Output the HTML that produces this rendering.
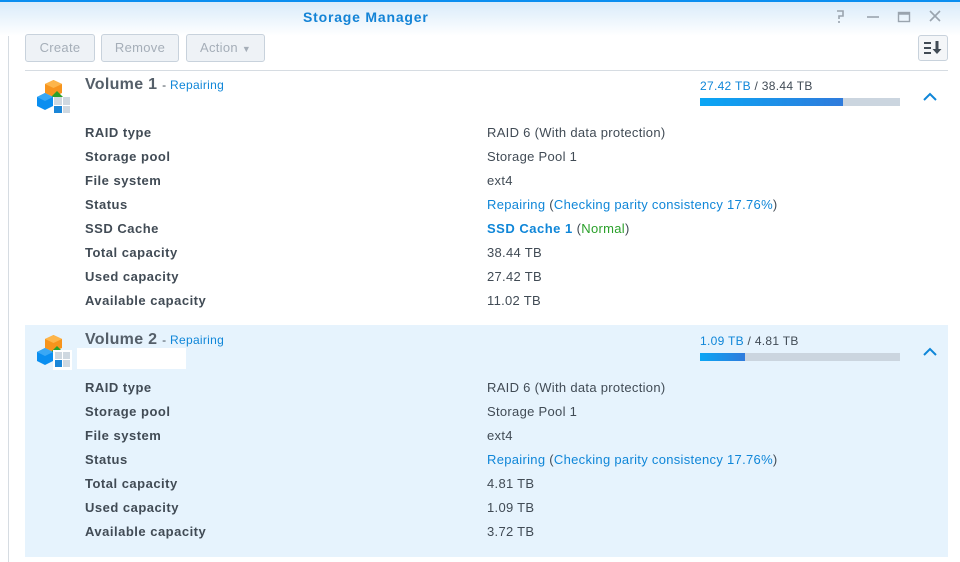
<!DOCTYPE html>
<html><head><meta charset="utf-8"><style>
*{margin:0;padding:0;box-sizing:border-box}
body{width:960px;height:562px;overflow:hidden;background:#fff;font-family:"Liberation Sans",Arial,sans-serif;font-size:13px;color:#414b55;position:relative;letter-spacing:0.3px}
.a{position:absolute;white-space:nowrap}
.tb{left:0;top:0;width:960px;height:36px;background:linear-gradient(#d9ebfa,#fff);border-top:2px solid #0a8ef0}
.btn{top:34px;height:28px;border:1px solid #c8d2dc;border-radius:3px;background:#eef2f6;color:#a5aeb8;font-size:13px;text-align:center;line-height:26px}
.lbl{left:85px;font-weight:bold;color:#414b55;letter-spacing:0.5px}
.val{left:487px;color:#414b55}
.blue{color:#0f86d8}
.bar{left:700px;width:200px;height:8px;background:#cbd5df}
.bar div{height:8px;background:linear-gradient(90deg,#0aa6f5,#2f7bdc)}
</style></head><body>
<div class="a tb"></div>
<div class="a" style="left:303px;top:9px;font-size:14px;font-weight:bold;color:#1383d6;letter-spacing:0.8px">Storage Manager</div>
<svg class="a" style="left:830px;top:8px" width="120" height="18" viewBox="0 0 120 18">
<path d="M7 3h6v5h-4v3M9 13v2" stroke="#9aa4ae" stroke-width="1.6" fill="none"/>
<path d="M37 9h12" stroke="#9aa4ae" stroke-width="1.6"/>
<rect x="68.5" y="4.5" width="11" height="9" stroke="#9aa4ae" stroke-width="1.4" fill="none"/><path d="M68 5.5h12" stroke="#9aa4ae" stroke-width="2.5"/>
<path d="M100 3l10 10M110 3l-10 10" stroke="#9aa4ae" stroke-width="1.6"/></svg>
<div class="a" style="left:8px;top:36px;width:1px;height:526px;background:#d6dce2"></div>
<div class="a btn" style="left:25px;width:70px">Create</div>
<div class="a btn" style="left:101px;width:78px">Remove</div>
<div class="a btn" style="left:186px;width:79px">Action <span style="font-size:9px">▼</span></div>
<div class="a" style="left:918px;top:35px;width:30px;height:26px;border:1px solid #c8d2dc;border-radius:3px;background:#f4f6f8"></div>
<svg class="a" style="left:918px;top:35px" width="30" height="26" viewBox="0 0 30 26">
<path d="M6 8h7M6 13h7M6 18h7" stroke="#414b55" stroke-width="2"/>
<path d="M19 6v10" stroke="#414b55" stroke-width="3"/><path d="M14.5 14h9l-4.5 5z" fill="#414b55"/></svg>
<div class="a" style="left:25px;top:70px;width:923px;height:1px;background:#d6dce2"></div>

<svg class="a" style="left:36px;top:79px" width="36" height="36" viewBox="0 0 36 36">
<polygon points="17.5,1 26,5 26,14 17.5,18 9,14 9,5" fill="#f7941d"/><polygon points="17.5,1 26,5 17.5,9 9,5" fill="#fdb54a"/>
<polygon points="21,12 27,18 15,18" fill="#2aa02a"/>
<polygon points="9,14 17,18 17,27 9,31 1,27 1,18" fill="#0a8ef0"/><polygon points="9,14 17,18 9,22 1,18" fill="#3aa8f5"/>
<rect x="18" y="18" width="8" height="8" fill="#cfd8e0"/><rect x="27" y="18" width="7" height="8" fill="#cfd8e0"/>
<rect x="18" y="27" width="8" height="7" fill="#1a86d8"/><rect x="27" y="27" width="7" height="7" fill="#cfd8e0"/></svg>
<div class="a" style="left:85px;top:76px;font-size:16px;font-weight:bold;color:#555f69">Volume 1 <span style="font-weight:normal;font-size:12px;color:#414b55">- <span class="blue">Repairing</span></span></div>
<div class="a" style="left:700px;top:79px;font-size:12px"><span class="blue">27.42 TB</span> / 38.44 TB</div>
<div class="a bar" style="top:98px"><div style="width:143px"></div></div>
<svg class="a" style="left:922px;top:92px" width="16" height="10"><path d="M2 8l6-6 6 6" stroke="#0f86d8" stroke-width="2" fill="none"/></svg>

<div class="a lbl" style="top:125px">RAID type</div><div class="a val" style="top:125px">RAID 6 (With data protection)</div>
<div class="a lbl" style="top:149px">Storage pool</div><div class="a val" style="top:149px">Storage Pool 1</div>
<div class="a lbl" style="top:173px">File system</div><div class="a val" style="top:173px">ext4</div>
<div class="a lbl" style="top:197px">Status</div><div class="a val" style="top:197px"><span class="blue">Repairing</span> (<span class="blue">Checking parity consistency 17.76%</span>)</div>
<div class="a lbl" style="top:221px">SSD Cache</div><div class="a val" style="top:221px"><b class="blue" style="letter-spacing:0.5px">SSD Cache 1</b> (<span style="color:#2aa02a">Normal</span>)</div>
<div class="a lbl" style="top:245px">Total capacity</div><div class="a val" style="top:245px">38.44 TB</div>
<div class="a lbl" style="top:269px">Used capacity</div><div class="a val" style="top:269px">27.42 TB</div>
<div class="a lbl" style="top:293px">Available capacity</div><div class="a val" style="top:293px">11.02 TB</div>

<div class="a" style="left:25px;top:325px;width:923px;height:232px;background:#e6f3fd"></div>
<svg class="a" style="left:36px;top:334px" width="36" height="36" viewBox="0 0 36 36">
<polygon points="17.5,1 26,5 26,14 17.5,18 9,14 9,5" fill="#f7941d"/><polygon points="17.5,1 26,5 17.5,9 9,5" fill="#fdb54a"/>
<polygon points="21,12 27,18 15,18" fill="#2aa02a"/>
<polygon points="9,14 17,18 17,27 9,31 1,27 1,18" fill="#0a8ef0"/><polygon points="9,14 17,18 9,22 1,18" fill="#3aa8f5"/>
<rect x="17" y="16" width="19" height="20" fill="#fff"/>
<rect x="19" y="18" width="7" height="7" fill="#cfd8e0"/><rect x="27" y="18" width="7" height="7" fill="#cfd8e0"/>
<rect x="19" y="26" width="7" height="7" fill="#1a86d8"/><rect x="27" y="26" width="7" height="7" fill="#cfd8e0"/></svg>
<div class="a" style="left:77px;top:348px;width:109px;height:21px;background:#fff"></div>
<div class="a" style="left:85px;top:331px;font-size:16px;font-weight:bold;color:#555f69">Volume 2 <span style="font-weight:normal;font-size:12px;color:#414b55">- <span class="blue">Repairing</span></span></div>
<div class="a" style="left:700px;top:334px;font-size:12px"><span class="blue">1.09 TB</span> / 4.81 TB</div>
<div class="a bar" style="top:353px"><div style="width:45px"></div></div>
<svg class="a" style="left:922px;top:347px" width="16" height="10"><path d="M2 8l6-6 6 6" stroke="#0f86d8" stroke-width="2" fill="none"/></svg>

<div class="a lbl" style="top:380px">RAID type</div><div class="a val" style="top:380px">RAID 6 (With data protection)</div>
<div class="a lbl" style="top:404px">Storage pool</div><div class="a val" style="top:404px">Storage Pool 1</div>
<div class="a lbl" style="top:428px">File system</div><div class="a val" style="top:428px">ext4</div>
<div class="a lbl" style="top:452px">Status</div><div class="a val" style="top:452px"><span class="blue">Repairing</span> (<span class="blue">Checking parity consistency 17.76%</span>)</div>
<div class="a lbl" style="top:476px">Total capacity</div><div class="a val" style="top:476px">4.81 TB</div>
<div class="a lbl" style="top:500px">Used capacity</div><div class="a val" style="top:500px">1.09 TB</div>
<div class="a lbl" style="top:524px">Available capacity</div><div class="a val" style="top:524px">3.72 TB</div>
</body></html>
